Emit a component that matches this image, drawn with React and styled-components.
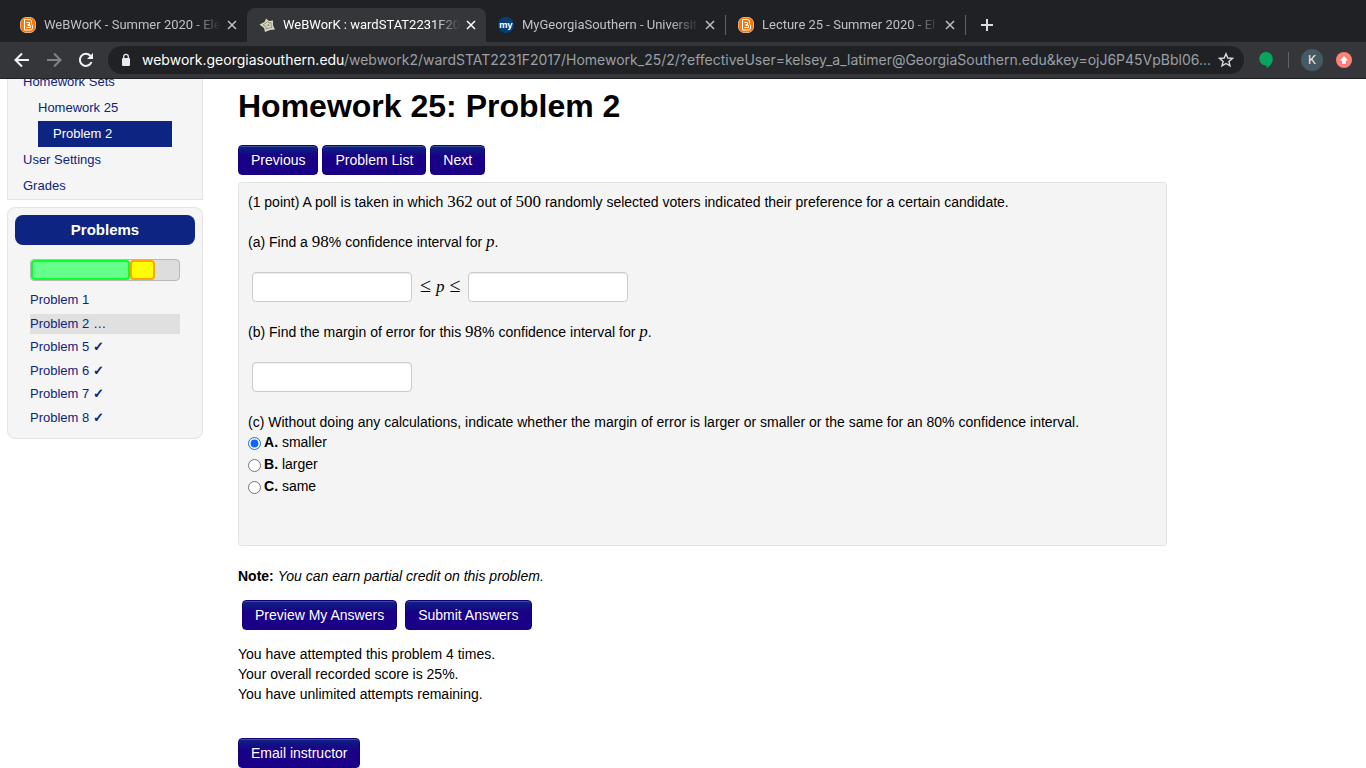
import React from 'react';
import styled, { createGlobalStyle } from 'styled-components';

const Global = createGlobalStyle`
  *, *::before, *::after { box-sizing: border-box; }
  body { margin: 0; background: #fff; color: #000; font: 14px/20px "Liberation Sans", Arial, sans-serif; }
  ul, h1, h2, p, fieldset { margin: 0; padding: 0; border: 0; list-style: none; }
  a { color: inherit; text-decoration: none; }
  button, input { font: inherit; }
`;

const Window = styled.div`
  display: flex;
  flex-direction: column;
  height: 100vh;
`;

/* ---------- browser chrome ---------- */

const TabStrip = styled.header`
  display: flex;
  align-items: flex-end;
  flex: none;
  height: 42px;
  padding-left: 8px;
  background: #202124;
  color: #bdc1c6;
  font-family: Roboto, sans-serif;
  font-size: 13px;
`;

const Tab = styled.div`
  display: flex;
  align-items: center;
  flex: 0 1 239px;
  min-width: 0;
  height: 34px;
  padding: 0 7px 0 12px;
  border-radius: 8px 8px 0 0;
  background: ${(p) => (p.$active ? '#35363a' : 'transparent')};
  color: ${(p) => (p.$active ? '#fff' : 'inherit')};
`;

const TabTitle = styled.span`
  flex: 1;
  min-width: 0;
  margin: 0 3px 0 8px;
  overflow: hidden;
  white-space: nowrap;
  mask-image: linear-gradient(to right, #000 calc(100% - 28px), transparent);
`;

const IconButton = styled.button`
  display: grid;
  place-items: center;
  flex: none;
  width: ${(p) => p.$size || 16}px;
  height: ${(p) => p.$size || 16}px;
  padding: 0;
  border: 0;
  background: none;
  color: inherit;
`;

const Divider = styled.span`
  flex: none;
  width: 1px;
  height: ${(p) => p.$height}px;
  margin-bottom: ${(p) => p.$bottom || 0}px;
  background: #5f6368;
`;

const NewTab = styled(IconButton)`
  margin: 0 0 3px 7px;
`;

const Toolbar = styled.div`
  display: flex;
  align-items: center;
  flex: none;
  height: 37px;
  padding: 0 14px 0 8px;
  background: #35363a;
  color: #f1f3f4;
  border-bottom: 1px solid #202124;
  font-family: Inter, Roboto, sans-serif;
`;

const NavButtons = styled.div`
  display: flex;
  gap: 4px;
  margin-right: 8px;
`;

const AddressBar = styled.div`
  display: flex;
  align-items: center;
  flex: 1;
  min-width: 0;
  height: 28px;
  padding: 0 9px 0 12px;
  border-radius: 14px;
  background: #202124;
`;

const Url = styled.span`
  flex: 1;
  min-width: 0;
  margin: 0 4px 0 10px;
  overflow: hidden;
  white-space: nowrap;
  color: #9aa0a6;
  font-size: 14px;
  b { color: #fff; font-weight: 400; }
`;

const Extensions = styled.div`
  display: flex;
  align-items: center;
  margin-left: 14px;
`;

const Spacer = styled.span`
  width: 14px;
`;

const Avatar = styled.span`
  display: grid;
  place-items: center;
  width: 22px;
  height: 22px;
  margin: 0 13px 0 12px;
  border-radius: 50%;
  background: #455a64;
  font-size: 12px;
`;

const Arrow = ({ flip, dim }) => (
  <svg width="16" height="16" viewBox="0 0 16 16" fill="none" stroke={dim ? '#7f8286' : '#f1f3f4'} strokeWidth="2">
    <path d={flip ? 'M1 8h13M8 1.5 14.5 8 8 14.5' : 'M15 8H2M8 1.5 1.5 8 8 14.5'} />
  </svg>
);

const Reload = () => (
  <svg width="16" height="16" viewBox="0 0 16 16" fill="none" stroke="#f1f3f4" strokeWidth="2">
    <path d="M13.5 10A6 6 0 1 1 12.3 3.8L14 5.5" />
    <path d="M15 1v6H9z" fill="#f1f3f4" stroke="none" />
  </svg>
);

const Lock = () => (
  <svg width="12" height="14" viewBox="0 0 12 14">
    <rect x="2" y="5" width="8" height="8" rx="1" fill="#e8eaed" />
    <path d="M3.7 5V3.6a2.3 2.3 0 0 1 4.6 0V5" fill="none" stroke="#e8eaed" strokeWidth="1.3" />
  </svg>
);

const Star = () => (
  <svg width="16" height="16" viewBox="0 0 16 16" fill="none" stroke="#dadce0" strokeWidth="1.4">
    <path d="m8 1.8 1.8 4.2 4.6.4-3.5 3 1.1 4.5-4-2.4-4 2.4 1.1-4.5-3.5-3 4.6-.4z" />
  </svg>
);

const Close = () => (
  <svg width="10" height="10" viewBox="0 0 10 10" stroke="currentColor" strokeWidth="1.5">
    <path d="m1 1 8 8M9 1 1 9" />
  </svg>
);

const Plus = () => (
  <svg width="14" height="14" viewBox="0 0 14 14" stroke="#dadce0" strokeWidth="2">
    <path d="M7 1v12M1 7h12" />
  </svg>
);

const CourseIcon = () => (
  <svg width="16" height="16" viewBox="0 0 16 16">
    <rect width="16" height="16" rx="6.5" fill="#fbe3cc" />
    <rect x=".5" y=".5" width="15" height="15" rx="6" fill="#f5790a" />
    <g fill="none" stroke="#fff">
      <path d="M4.500 2.500h5q2 0 2 2v2q0 1 1 2v2.500q0 2-2 2h-6z" />
      <path d="M6.500 5.500h3v2h-2M6.500 10.500h4v-2h-3" />
    </g>
  </svg>
);

const WebworkIcon = () => (
  <svg width="16" height="16" viewBox="0 0 16 16">
    <path d="m.5 7.500 5-2.500L7 1.500l3 2.500 4-.5v5l2 4-5 .5-5 2-1-4z" fill="#d6d7bd" />
    <path d="m4 8 3-2 1.500-1.500L10 6l2-.5v3l1 2-3 .5-3 1v-2.500z" fill="none" stroke="#85866f" strokeWidth=".8" />
    <path d="m7.500 8.500 2-1.500 1 2z" fill="#85866f" />
  </svg>
);

const MyIcon = styled.span`
  display: grid;
  place-items: center;
  flex: none;
  width: 16px;
  height: 16px;
  border-radius: 50%;
  background: #043f78;
  color: #fff;
  font: bold 9px/14px Inter, sans-serif;
`;

const Bubble = () => (
  <svg width="14" height="16" viewBox="0 0 14 16">
    <path d="M7 0a6.800 6.800 0 0 0 0 13.600h.5V16c3.500-1.500 6.300-5 6.300-9.200A6.800 6.800 0 0 0 7 0z" fill="#0aa55c" />
  </svg>
);

const Update = () => (
  <svg width="16" height="16" viewBox="0 0 16 16">
    <circle cx="8" cy="8" r="8" fill="#ff8078" />
    <path d="M8 4l4 4.500H9.800V12H6.200V8.500H4z" fill="#fff" />
  </svg>
);

const tabs = [
  { title: 'WeBWorK - Summer 2020 - Ele', icon: <CourseIcon /> },
  { title: 'WeBWorK : wardSTAT2231F201', icon: <WebworkIcon />, active: true },
  { title: 'MyGeorgiaSouthern - Universit', icon: <MyIcon>my</MyIcon>, divider: true },
  { title: 'Lecture 25 - Summer 2020 - El', icon: <CourseIcon />, divider: true },
];

function BrowserChrome() {
  return (
    <>
      <TabStrip>
        {tabs.map((t) => (
          <React.Fragment key={t.title}>
            <Tab $active={t.active}>
              {t.icon}
              <TabTitle>{t.title}</TabTitle>
              <IconButton aria-label="Close tab"><Close /></IconButton>
            </Tab>
            {t.divider && <Divider $height={20} $bottom={7} />}
          </React.Fragment>
        ))}
        <NewTab $size={28} aria-label="New tab"><Plus /></NewTab>
      </TabStrip>
      <Toolbar>
        <NavButtons>
          <IconButton $size={28} aria-label="Back"><Arrow /></IconButton>
          <IconButton $size={28} aria-label="Forward"><Arrow flip dim /></IconButton>
          <IconButton $size={28} aria-label="Reload"><Reload /></IconButton>
        </NavButtons>
        <AddressBar>
          <Lock />
          <Url>
            <b>webwork.georgiasouthern.edu</b>/webwork2/wardSTAT2231F2017/Homework_25/2/?effectiveUser=kelsey_a_latimer@GeorgiaSouthern.edu&amp;key=ojJ6P45VpBbl06...
          </Url>
          <IconButton $size={18} aria-label="Bookmark"><Star /></IconButton>
        </AddressBar>
        <Extensions>
          <IconButton aria-label="Hangouts"><Bubble /></IconButton>
          <Spacer />
          <Divider $height={16} />
          <Avatar>K</Avatar>
          <IconButton aria-label="Update"><Update /></IconButton>
        </Extensions>
      </Toolbar>
    </>
  );
}

/* ---------- page ---------- */

const Page = styled.div`
  display: grid;
  grid-template-columns: 231px minmax(0, 14fr) 3fr;
  flex: 1;
  align-items: start;
  min-height: 0;
  padding-left: 7px;
  overflow: hidden;
`;

const Sidebar = styled.aside`
  display: flex;
  flex-direction: column;
  gap: 7px;
  margin: -26px 35px 0 0;
  color: #0d2482;
  font-size: 13px;
`;

const Box = styled.nav`
  padding: ${(p) => (p.$rounded ? '7px 7px 10px' : '15px 15px 0')};
  border: 1px solid #e3e3e3;
  border-radius: ${(p) => (p.$rounded ? '8px' : '0')};
  background: #f5f5f5;
`;

const NavLink = styled.a`
  display: block;
  margin: 0 ${(p) => (p.$nested ? 15 : 0)}px;
  padding-left: ${(p) => (p.$current ? 15 : 0)}px;
  line-height: 26px;
  background: ${(p) => (p.$current ? '#0d2482' : 'transparent')};
  color: ${(p) => (p.$current ? '#fff' : 'inherit')};
`;

const SideHeading = styled.h2`
  border-radius: 8px;
  background: #0d2482;
  color: #fff;
  font-size: 15px;
  line-height: 30px;
  text-align: center;
`;

const Progress = styled.div`
  display: flex;
  height: 22px;
  margin: 14px 15px 9px;
  border: 1px solid #b8b8b8;
  border-radius: 4px;
  background: #ddd;
`;

const Segment = styled.span`
  width: ${(p) => p.$width}%;
  border: 2px solid ${(p) => p.$edge};
  border-radius: 4px;
  background: ${(p) => p.$fill};
`;

const ProblemLinks = styled.ul`
  display: flex;
  flex-direction: column;
  justify-content: space-between;
  min-height: 138px;
  margin: 0 15px;
`;

const ProblemLink = styled.a`
  display: block;
  line-height: 20px;
  background: ${(p) => (p.$current ? '#e0e0e0' : 'transparent')};
`;

const Mark = styled.span`
  margin-left: 4px;
  font-weight: ${(p) => (p.$bold ? 700 : 400)};
`;

const Content = styled.main`
  display: flex;
  flex-direction: column;
  align-items: flex-start;
`;

const Title = styled.h1`
  margin: 7px 0 19px;
  font-size: 32px;
  line-height: 40px;
`;

const ButtonRow = styled.div`
  display: flex;
  gap: ${(p) => (p.$spaced ? 8 : 4)}px;
  padding-left: ${(p) => (p.$spaced ? 4 : 0)}px;
`;

const Button = styled.button`
  height: 30px;
  padding: 0 12px;
  border: 1px solid #14007a;
  border-radius: 4px;
  background: linear-gradient(#0d2482, #190087 40%);
  box-shadow: inset 0 1px 0 rgba(255, 255, 255, 0.2);
  color: #fff;
  line-height: 20px;
  white-space: nowrap;
`;

const Problem = styled.section`
  display: flex;
  flex-direction: column;
  gap: 20px;
  width: 100%;
  margin-top: 7px;
  padding: 9px 9px 49px;
  border: 1px solid #e3e3e3;
  border-radius: 3px;
  background: #f4f4f4;
`;

const MathText = styled.span`
  font: ${(p) => (p.$italic ? 'italic' : 'normal')} 17px/1 "Liberation Serif", "Times New Roman", serif;
`;

const Inequality = styled.span`
  display: flex;
  align-items: baseline;
  gap: 5px;
  padding-bottom: 4px;
  font: 20px/20px "Liberation Serif", "Times New Roman", serif;
`;

const AnswerRow = styled.div`
  display: flex;
  align-items: center;
  gap: 8px;
  padding-left: 4px;
`;

const Answer = styled.input`
  width: 160px;
  height: 30px;
  padding: 4px 6px;
  border: 1px solid #ccc;
  border-radius: 4px;
  background: #fff;
  box-shadow: inset 0 1px 1px rgba(0, 0, 0, 0.075);
`;

const Choices = styled.fieldset`
  display: flex;
  flex-direction: column;
  gap: 2px;
`;

const Choice = styled.label`
  display: flex;
  align-items: center;
  gap: 3px;
  input { width: 13px; height: 13px; margin: 2px 0 0; accent-color: #0d66ff; }
`;

const Note = styled.p`
  margin: 20px 0 14px;
`;

const Status = styled.p`
  margin: 14px 0 34px;
`;

const navItems = [
  { label: 'Homework Sets' },
  { label: 'Homework 25', nested: true },
  { label: 'Problem 2', nested: true, current: true },
  { label: 'User Settings' },
  { label: 'Grades' },
];

const problems = [
  { n: 1 },
  { n: 2, mark: '…', current: true },
  { n: 5, mark: '✓' },
  { n: 6, mark: '✓' },
  { n: 7, mark: '✓' },
  { n: 8, mark: '✓' },
];

const choices = [
  ['A', 'smaller'],
  ['B', 'larger'],
  ['C', 'same'],
];

export default function App() {
  return (
    <Window>
      <Global />
      <BrowserChrome />
      <Page>
        <Sidebar>
          <Box>
            {navItems.map((n) => (
              <NavLink key={n.label} href="#" $nested={n.nested} $current={n.current}>{n.label}</NavLink>
            ))}
          </Box>
          <Box $rounded>
            <SideHeading>Problems</SideHeading>
            <Progress>
              <Segment $width={67} $edge="#0aff2b" $fill="#66ff8c" />
              <Segment $width={17} $edge="#ffa600" $fill="#ff0" />
            </Progress>
            <ProblemLinks>
              {problems.map((p) => (
                <li key={p.n}>
                  <ProblemLink href="#" $current={p.current}>
                    Problem {p.n}
                    {p.mark && <Mark $bold={p.mark === '✓'}>{p.mark}</Mark>}
                  </ProblemLink>
                </li>
              ))}
            </ProblemLinks>
          </Box>
        </Sidebar>

        <Content>
          <Title>Homework 25: Problem 2</Title>
          <ButtonRow>
            <Button>Previous</Button>
            <Button>Problem List</Button>
            <Button>Next</Button>
          </ButtonRow>
          <Problem>
            <p>
              (1 point) A poll is taken in which <MathText>362</MathText> out of <MathText>500</MathText> randomly
              selected voters indicated their preference for a certain candidate.
            </p>
            <p>
              (a) Find a <MathText>98</MathText>% confidence interval for <MathText $italic>p</MathText>.
            </p>
            <AnswerRow>
              <Answer aria-label="Lower bound" />
              <Inequality>
                <span>≤</span>
                <MathText $italic>p</MathText>
                <span>≤</span>
              </Inequality>
              <Answer aria-label="Upper bound" />
            </AnswerRow>
            <p>
              (b) Find the margin of error for this <MathText>98</MathText>% confidence interval
              for <MathText $italic>p</MathText>.
            </p>
            <AnswerRow>
              <Answer aria-label="Margin of error" />
            </AnswerRow>
            <div>
              <p>
                (c) Without doing any calculations, indicate whether the margin of error is larger or smaller or the
                same for an 80% confidence interval.
              </p>
              <Choices>
                {choices.map(([letter, text]) => (
                  <Choice key={letter}>
                    <input type="radio" name="margin" defaultChecked={letter === 'A'} />
                    <span><b>{letter}.</b> {text}</span>
                  </Choice>
                ))}
              </Choices>
            </div>
          </Problem>
          <Note><b>Note:</b> <i>You can earn partial credit on this problem.</i></Note>
          <ButtonRow $spaced>
            <Button>Preview My Answers</Button>
            <Button>Submit Answers</Button>
          </ButtonRow>
          <Status>
            You have attempted this problem 4 times.<br />
            Your overall recorded score is 25%.<br />
            You have unlimited attempts remaining.
          </Status>
          <Button>Email instructor</Button>
        </Content>
      </Page>
    </Window>
  );
}
